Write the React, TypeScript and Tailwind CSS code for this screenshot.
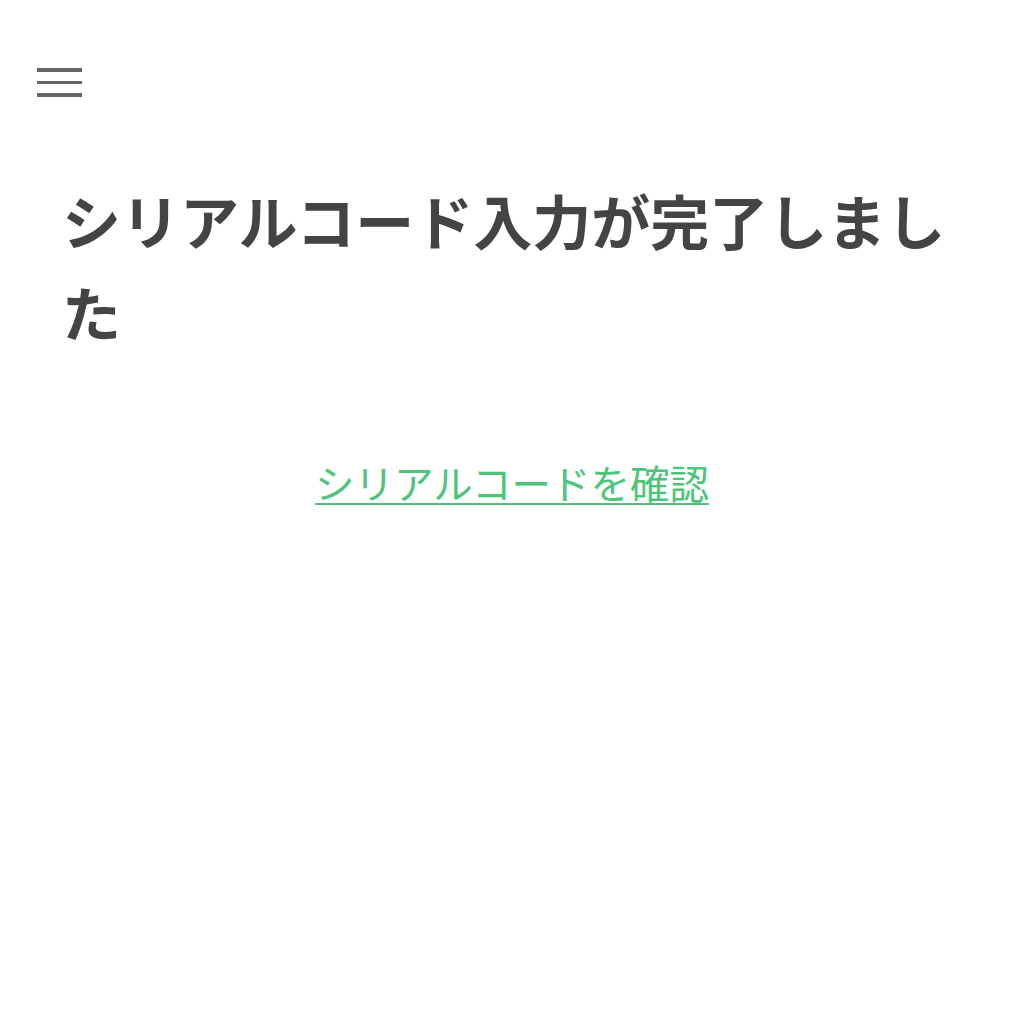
export default function App() {
  return (
    <div
      className="min-h-screen bg-white"
      style={{ fontFamily: '"Noto Sans CJK JP", "Noto Sans", sans-serif' }}
    >
      {/* Header */}
      <header className="px-[37px] pt-[68px]">
        <button className="flex w-[45px] flex-col gap-[9px]" aria-label="menu">
          <span className="block h-[3.5px] w-full bg-[#666]" />
          <span className="block h-[3.5px] w-full bg-[#666]" />
          <span className="block h-[3.5px] w-full bg-[#666]" />
        </button>
      </header>

      <main className="px-[62px] pt-[77px]">
        <h1 className="text-[59px] font-bold leading-[92px] text-[#444]">
          シリアルコード入力が完了しました
        </h1>

        <div className="mt-[96px] text-center">
          <a
            href="#"
            className="text-[39.5px] leading-[56px] text-[#4cc57a] underline decoration-[2px] underline-offset-[4px]"
          >
            シリアルコードを確認
          </a>
        </div>
      </main>
    </div>
  );
}
